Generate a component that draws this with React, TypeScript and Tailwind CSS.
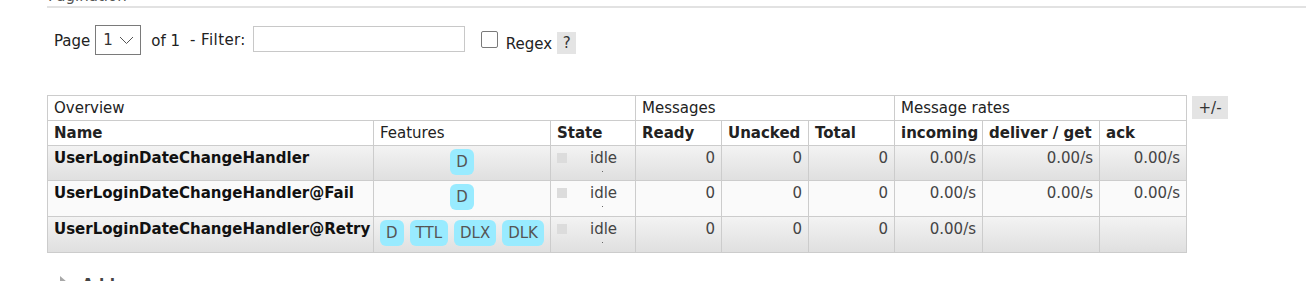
const rows = [
  {
    name: 'UserLoginDateChangeHandler',
    features: ['D'],
    counts: ['0', '0', '0'],
    rates: ['0.00/s', '0.00/s', '0.00/s'],
    alt: true,
  },
  {
    name: 'UserLoginDateChangeHandler@Fail',
    features: ['D'],
    counts: ['0', '0', '0'],
    rates: ['0.00/s', '0.00/s', '0.00/s'],
    alt: false,
  },
  {
    name: 'UserLoginDateChangeHandler@Retry',
    features: ['D', 'TTL', 'DLX', 'DLK'],
    counts: ['0', '0', '0'],
    rates: ['0.00/s', '', ''],
    alt: true,
  },
];

const th = 'border border-[#cccccc] px-[6px] pt-[3px] pb-[3px] text-left align-top';
const td = 'border border-[#cccccc] px-[6px] pt-[3px] align-top';

const App = () => {
  return (
    <div
      className="min-h-[281px] overflow-hidden bg-white pl-[47px] text-[15px] leading-[18px] text-[#222]"
      style={{ fontFamily: '"DejaVu Sans", Verdana, sans-serif' }}
    >
      {/* Pagination section */}
      <div className="-mt-[13px] border-b-2 border-[#e2e2e2] pb-[1px] pl-px text-[#555]">Pagination</div>

      <div className="mt-[17px] flex items-start pl-[7px]">
        <span className="mt-[7px]">Page</span>
        <div className="ml-[5px] flex h-[30px] w-[46px] items-center border border-[#7a7a7a] bg-white pl-[7px]">
          <span className="text-[#333]">1</span>
          <svg className="ml-[6px]" width="15" height="9" viewBox="0 0 15 9">
            <polyline points="1,1 7.5,7.5 14,1" fill="none" stroke="#555" strokeWidth="1" />
          </svg>
        </div>
        <span className="ml-[10px] mt-[7px]">of 1</span>
        <span className="ml-[10px] mt-[6px] tracking-[0.4px]">- Filter:</span>
        <div className="ml-[7px] mt-px h-[26px] w-[212px] border border-[#c8c8c8] bg-white" />
        <div className="ml-[16px] mt-[6px] h-[17px] w-[17px] rounded-[2px] border border-[#7a7a7a] bg-white" />
        <span className="ml-[8px] mt-[10px]">Regex</span>
        <span className="ml-[5px] mt-[7px] flex h-[22px] w-[19px] items-end justify-center bg-[#e4e4e4] pb-[2px] text-[#333]">?</span>
      </div>

      {/* Queue list */}
      <div className="mt-[40px] flex items-start gap-[5px]">
        <table className="w-[1139px] table-fixed border-collapse">
          <colgroup>
            <col className="w-[326px]" />
            <col className="w-[177px]" />
            <col className="w-[85px]" />
            <col className="w-[86px]" />
            <col className="w-[87px]" />
            <col className="w-[86px]" />
            <col className="w-[88px]" />
            <col className="w-[117px]" />
            <col className="w-[87px]" />
          </colgroup>
          <thead>
            <tr className="h-[25px]">
              <th colSpan={3} className={`${th} font-normal`}>Overview</th>
              <th colSpan={3} className={`${th} font-normal`}>Messages</th>
              <th colSpan={3} className={`${th} font-normal`}>Message rates</th>
            </tr>
            <tr className="h-[24px]">
              <th className={th}>Name</th>
              <th className={`${th} font-normal`}>Features</th>
              <th className={th}>State</th>
              <th className={th}>Ready</th>
              <th className={th}>Unacked</th>
              <th className={th}>Total</th>
              <th className={th}>incoming</th>
              <th className={th}>deliver / get</th>
              <th className={th}>ack</th>
            </tr>
          </thead>
          <tbody>
            {rows.map((row, i) => (
              <tr
                key={row.name}
                className={`${i === 0 ? 'h-[35px]' : 'h-[36px]'} ${
                  row.alt ? 'bg-gradient-to-b from-[#f3f3f3] to-[#dfdfdf]' : 'bg-[#fafafa]'
                }`}
              >
                <td className={`${td} whitespace-nowrap font-bold text-[#111]`}>{row.name}</td>
                <td className={`${td} pt-[2px]`}>
                  <div className="flex justify-center gap-[6px]">
                    {row.features.map((f) => (
                      <span key={f} className="rounded-[6px] bg-[#99ebff] px-[6px] py-[4px] text-[#555]">
                        {f}
                      </span>
                    ))}
                  </div>
                </td>
                <td className={td}>
                  <div className="flex items-start">
                    <span className="mt-[4px] h-[10px] w-[10px] bg-[#dcdcdc]" />
                    <span className="relative ml-[23px] text-[#444]">
                      idle
                      <span className="absolute left-[12px] top-[22px] h-px w-px bg-[#666]" />
                    </span>
                  </div>
                </td>
                {row.counts.map((c, j) => (
                  <td key={j} className={`${td} text-right text-[#444]`}>{c}</td>
                ))}
                {row.rates.map((r, j) => (
                  <td key={j} className={`${td} text-right text-[#444]`}>{r}</td>
                ))}
              </tr>
            ))}
          </tbody>
        </table>
        <span className="mt-px flex h-[23px] w-[36px] items-center justify-center bg-[#e4e4e4] text-[#333]">+/-</span>
      </div>

      {/* Add a new queue section */}
      <div className="mt-[23px] flex items-start pl-[13px]">
        <svg width="8" height="12" viewBox="0 0 8 12">
          <polygon points="0,0 7,6 0,12" fill="#a8a8a8" />
        </svg>
        <span className="ml-[14px] font-bold text-[#444]">Add a new queue</span>
      </div>
    </div>
  );
};

export default App;
